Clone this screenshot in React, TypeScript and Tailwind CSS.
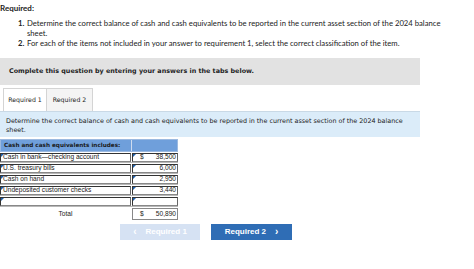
import React from "react";

const rows = [
  { label: "Cash in bank\u2014checking account", dollar: true, value: "38,500" },
  { label: "U.S. treasury bills", dollar: false, value: "6,000" },
  { label: "Cash on hand", dollar: false, value: "2,950" },
  { label: "Undeposited customer checks", dollar: false, value: "3,440" },
  { label: "", dollar: false, value: "" },
];

const Marker = () => (
  <span className="absolute left-0 top-0 h-0 w-0 border-t-[3px] border-r-[3px] border-t-[#1f5fa8] border-r-transparent" />
);

const App: React.FC = () => {
  return (
    <div className="w-[474px] h-[269px] bg-white overflow-hidden text-[#222]">
      <div className="pt-[3px] font-['Lato',sans-serif]">
        <p className="text-[8px] font-bold leading-[10px]">Required:</p>
        <ol className="mt-[5px] pl-[18px] pr-[20px] text-[7.7px] leading-[10px]">
          <li className="flex">
            <span className="font-bold w-[9px] shrink-0">1.</span>
            <span>
              Determine the correct balance of cash and cash equivalents to be reported in the current asset section of
              the 2024 balance sheet.
            </span>
          </li>
          <li className="flex">
            <span className="font-bold w-[9px] shrink-0">2.</span>
            <span>For each of the items not included in your answer to requirement 1, select the correct classification of the item.</span>
          </li>
        </ol>
      </div>

      <div className="mt-[10px] w-[420px] h-[27px] bg-[#e2e2e2] flex items-center pl-[9px] font-['DejaVu_Sans',sans-serif] text-[6.4px] font-bold">
        Complete this question by entering your answers in the tabs below.
      </div>

      <div className="mt-[3px] flex pl-[3px] font-['DejaVu_Sans',sans-serif] text-[6.2px]">
        <div className="w-[44px] h-[23px] border border-b-0 border-[#d4d4d4] bg-white flex items-center justify-center">
          Required 1
        </div>
        <div className="w-[46px] h-[23px] border border-l-0 border-b-0 border-[#d4d4d4] bg-[#f4f4f4] flex items-center justify-center">
          Required 2
        </div>
      </div>

      <div className="w-[420px] h-[26px] bg-[#dbecf9] border-t border-[#c9d9e6] pl-[6px] pt-[5px] font-['DejaVu_Sans',sans-serif] text-[6.4px] leading-[8.5px]">
        Determine the correct balance of cash and cash equivalents to be reported in the current asset section of the 2024 balance
        sheet.
      </div>

      <div className="mt-[2px] w-[178px] font-['Liberation_Sans',sans-serif] text-[6.6px]">
        <div className="flex h-[13px] bg-[#6f9fdb] border border-[#9bb9e0]">
          <div className="w-[131px] border-r border-[#cfdcef] pl-[3px] flex items-center font-['DejaVu_Sans',sans-serif] font-bold text-[5.7px] text-[#1a1a1a]">
            Cash and cash equivalents includes:
          </div>
          <div className="flex-1" />
        </div>
        {rows.map((r, i) => (
          <div key={i} className="flex h-[11px] border-b border-[#b8b8b8]">
            <div className="w-[131px] relative border border-[#333] border-r-[#666] border-b-[#888] bg-white pl-[2px] flex items-center leading-none mt-[1px] h-[9px]">
              <Marker />
              {r.label}
            </div>
            <div className="w-[1px]" />
            <div className="flex-1 relative border border-[#333] border-r-[#666] border-b-[#888] bg-white flex items-center justify-between pl-[7px] pr-[1px] mt-[1px] h-[9px] leading-none">
              <Marker />
              <span>{r.dollar ? "$" : ""}</span>
              <span>{r.value}</span>
            </div>
          </div>
        ))}
        <div className="flex h-[12px] mt-[1px]">
          <div className="w-[131px] flex items-center justify-center">Total</div>
          <div className="w-[1px]" />
          <div className="flex-1 border border-[#888] flex items-center justify-between pl-[7px] pr-[1px]">
            <span>$</span>
            <span>50,890</span>
          </div>
        </div>
      </div>

      <div className="mt-[4px] flex pl-[120px] gap-[11px] font-['Liberation_Sans',sans-serif] text-[8px] font-bold text-white">
        <div className="w-[80px] h-[16px] bg-[#d6e2f3] flex items-center justify-center gap-[9px]">
          <span className="text-[10px] leading-none">&lsaquo;</span>
          <span>Required 1</span>
        </div>
        <div className="w-[81px] h-[16px] bg-[#2f6db5] flex items-center justify-center gap-[9px]">
          <span>Required 2</span>
          <span className="text-[10px] leading-none">&rsaquo;</span>
        </div>
      </div>
    </div>
  );
};

export default App;
